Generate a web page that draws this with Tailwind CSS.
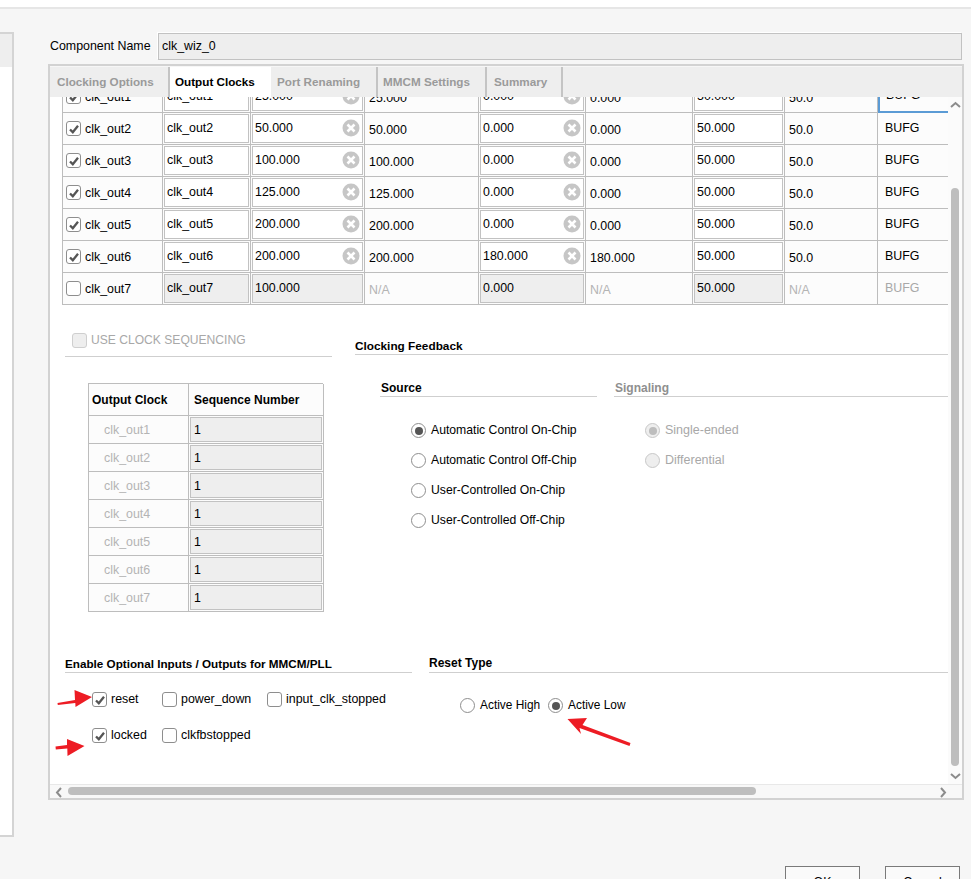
<!DOCTYPE html>
<html lang="en">
<head>
    <meta charset="UTF-8">
    <title>Clocking Wizard</title>
    <script src="https://cdn.jsdelivr.net/npm/@tailwindcss/browser@4"></script>
</head>
<body class="relative h-[879px] w-[971px] overflow-hidden bg-white font-['Liberation_Sans',Arial,sans-serif] text-[12.4px] text-black">
    <div class="h-[7px] bg-white"></div>
    <div class="flex h-[872px] border-t-2 border-[#e6e6e6] bg-[#f6f6f6]">
        <!-- Left panel -->
        <div class="mt-[23px] flex h-[805px] w-[14px] shrink-0 flex-col border-y-2 border-r-2 border-[#d4d4d4] bg-white">
            <div class="h-[33px] bg-[#eeeeee]"></div>
        </div>
        <!-- Right side -->
        <div class="min-w-0 flex-1 pl-[34px] pr-[7px] pt-[24px]">
            <div class="flex h-[27px] items-center pr-[2px]">
                <span class="w-[110px] pl-[2px]">Component Name</span>
                <div class="flex h-full flex-1 items-center border border-[#c2c2c2] bg-[#eeeeee] pl-[3px] shadow-[-1px_-1px_0_#fff]">clk_wiz_0</div>
            </div>
            <!-- Tabbed panel -->
            <div class="mt-[4px] flex h-[736px] flex-col border-2 border-[#d2d2d2] bg-white">
                <div class="flex h-[31px] border-t-[1px] border-[#f6f6f6] bg-[#eeeeee] text-[11.7px] font-bold text-[#9a9a9a]">
                    <div class="flex w-[118px] items-center pl-[7px]">Clocking Options</div>
                    <div class="flex w-[103px] items-center border-l-2 border-[#c4c4c4] bg-white pl-[5px] text-black">Output Clocks</div>
                    <div class="flex w-[105px] items-center pl-[6px]">Port Renaming</div>
                    <div class="flex w-[109px] items-center border-l-2 border-[#c4c4c4] pl-[5px]">MMCM Settings</div>
                    <div class="flex w-[78px] items-center border-x-2 border-[#c4c4c4] pl-[7px]">Summary</div>
                </div>
                <div class="flex h-[687px]">
                    <div class="w-[898px] shrink-0 overflow-hidden">
                        <!-- Output clocks table -->
                        <div id="clockRows" class="ml-[12px] mt-[-17px] w-[900px] border-l border-t border-[#bdbdbd]"></div>
                        <div class="flex">
                            <div class="ml-[15px] w-[267px]">
                                <div class="mt-[28px] flex items-center text-[12.1px] text-[#a8a8a8]">
                                    <span class="ml-[7px] h-[15px] w-[15px] rounded-[3px] border border-[#cfcfcf] bg-[#eeeeee]"></span>
                                    <span class="ml-[4px] leading-[15px]">USE CLOCK SEQUENCING</span>
                                </div>
                                <div class="mt-[8px] border-b border-[#cfcfcf]"></div>
                                <div id="seqTable" class="ml-[23px] mt-[26px] w-[235px] border-l border-t border-[#bdbdbd] bg-[#fcfcfc]"></div>
                            </div>
                            <div class="ml-[23px] flex-1">
                                <div class="mt-[33px] h-[17px] border-b border-[#cfcfcf] text-[11.8px] font-bold leading-[16px]">Clocking Feedback</div>
                                <div class="ml-[25px] mt-[25px] flex">
                                    <div class="w-[217px]">
                                        <div class="h-[17px] border-b border-[#cfcfcf] pl-[1px] text-[12px] font-bold leading-[17px]">Source</div>
                                        <div id="sourceRadios" class="ml-[31px] mt-[26px] flex flex-col gap-[15px] text-[12.2px]"></div>
                                    </div>
                                    <div class="ml-[17px] flex-1">
                                        <div class="h-[17px] border-b border-[#cfcfcf] pl-[1px] text-[12px] font-bold leading-[17px] text-[#8f8f8f]">Signaling</div>
                                        <div id="signalRadios" class="ml-[31px] mt-[26px] flex flex-col gap-[15px] text-[12.5px] text-[#a8a8a8]"></div>
                                    </div>
                                </div>
                            </div>
                        </div>
                        <!-- Optional ports and reset type -->
                        <div class="ml-[15px] mt-[44px] flex">
                            <div class="w-[347px]">
                                <div class="h-[17px] border-b border-[#cfcfcf] text-[11.7px] font-bold leading-[15px]">Enable Optional Inputs / Outputs for MMCM/PLL</div>
                                <div class="ml-[27px] mt-[19px] flex h-[15px] items-center">
                                    <div id="cbReset" class="w-[70px]"></div>
                                    <div id="cbPower" class="w-[105px]"></div>
                                    <div id="cbStopped"></div>
                                </div>
                                <div class="ml-[27px] mt-[21px] flex h-[15px] items-center">
                                    <div id="cbLocked" class="w-[70px]"></div>
                                    <div id="cbFb"></div>
                                </div>
                            </div>
                            <div class="ml-[17px] flex-1">
                                <div class="h-[17px] border-b border-[#cfcfcf] text-[12px] font-bold leading-[15px]">Reset Type</div>
                                <div id="resetRadios" class="ml-[31px] mt-[25px] flex text-[11.9px]"></div>
                            </div>
                        </div>
                    </div>
                    <!-- Vertical scrollbar -->
                    <div class="relative flex-1 bg-[#fbfbfb]">
                        <svg class="absolute left-[2px] top-[4px]" width="11" height="8" viewBox="0 0 11 8"><path d="M1 6 L5.5 2 L10 6" fill="none" stroke="#8c8c8c" stroke-width="2"/></svg>
                        <div class="absolute left-[3px] top-[91px] h-[578px] w-[8px] rounded-[4px] bg-[#bebebe]"></div>
                        <svg class="absolute left-[2px] top-[675px]" width="11" height="8" viewBox="0 0 11 8"><path d="M1 2 L5.5 6 L10 2" fill="none" stroke="#8c8c8c" stroke-width="2"/></svg>
                    </div>
                </div>
                <!-- Horizontal scrollbar -->
                <div class="relative h-[14px] border-t border-[#e8e8e8] bg-[#f8f8f8]">
                    <svg class="absolute left-[5px] top-[2px]" width="8" height="11" viewBox="0 0 8 11"><path d="M6 1 L2 5.5 L6 10" fill="none" stroke="#8c8c8c" stroke-width="2"/></svg>
                    <div class="absolute left-[18px] top-[2px] h-[8px] w-[688px] rounded-[4px] bg-[#bebebe]"></div>
                    <svg class="absolute left-[889px] top-[2px]" width="8" height="11" viewBox="0 0 8 11"><path d="M2 1 L6 5.5 L2 10" fill="none" stroke="#8c8c8c" stroke-width="2"/></svg>
                </div>
            </div>
            <!-- Dialog buttons -->
            <div class="ml-[737px] mt-[66px] flex gap-[25px]">
                <div class="flex h-[28px] w-[75px] justify-center border border-[#7a7a7a] bg-[#fafafa] pt-[6px]">OK</div>
                <div class="flex h-[28px] w-[75px] justify-center border border-[#7a7a7a] bg-[#fafafa] pt-[6px]">Cancel</div>
            </div>
        </div>
    </div>
    <!-- Red annotation arrows -->
    <svg class="pointer-events-none absolute left-0 top-0" width="971" height="879" viewBox="0 0 971 879">
        <path d="M57.5 703 L75 700 L74.5 690 L92 697 L75.5 707 L75.3 703 L57.8 705 Z" fill="#ed1c24"/>
        <path d="M55.5 746.5 L67 745 L67 739 L84.5 746 L67.5 756 L67.3 748.5 L55.8 749.5 Z" fill="#ed1c24"/>
        <path d="M567.5 719 L587 718 L582.5 725 L630.5 743 L629.5 746 L579.5 728 L581 734 Z" fill="#ed1c24"/>
    </svg>
    <script>
        //Icons
        const clearIcon = `<svg class="absolute right-[2px] top-[4px]" width="18" height="18" viewBox="0 0 18 18"><circle cx="9" cy="9" r="8.5" fill="#c6c6c6"/><path d="M5.5 5.5 L12.5 12.5 M12.5 5.5 L5.5 12.5" stroke="#fff" stroke-width="2.6"/></svg>`;
        const tick = `<svg width="12" height="12" viewBox="0 0 12 12"><path d="M2 6.5 L4.8 9.2 L10 2.8" fill="none" stroke="#555" stroke-width="2.3"/></svg>`;

        function checkbox(label, on) {
            return `<div class="flex items-center"><span class="flex h-[15px] w-[15px] items-center justify-center rounded-[3px] border-[1.5px] border-[#8e8e8e] bg-white">${on ? tick : ''}</span><span class="ml-[4px]">${label}</span></div>`;
        }
        function radio(label, on, off) {
            const ring = off ? 'border-[#c8c8c8] bg-[#eeeeee]' : 'border-[#8e8e8e] bg-white';
            const dot = off ? 'bg-[#bdbdbd]' : 'bg-[#555555]';
            return `<div class="flex h-[15px] items-center"><span class="flex h-[15px] w-[15px] items-center justify-center rounded-full border-[1.5px] ${ring}">${on ? `<span class="h-[8px] w-[8px] rounded-full ${dot}"></span>` : ''}</span><span class="ml-[5px]">${label}</span></div>`;
        }

        //Output clock rows
        const clocks = [
            ['clk_out1', '25.000', '25.000', '0.000', '0.000'],
            ['clk_out2', '50.000', '50.000', '0.000', '0.000'],
            ['clk_out3', '100.000', '100.000', '0.000', '0.000'],
            ['clk_out4', '125.000', '125.000', '0.000', '0.000'],
            ['clk_out5', '200.000', '200.000', '0.000', '0.000'],
            ['clk_out6', '200.000', '200.000', '180.000', '180.000'],
            ['clk_out7', '100.000', 'N/A', '0.000', 'N/A']
        ];
        const cell = 'relative border-r border-b border-[#bdbdbd]';
        function field(text, off, clear) {
            const bg = off ? 'bg-[#eeeeee]' : 'bg-white';
            return `<div class="${cell} p-[1px]"><div class="relative flex h-[29px] items-center border border-[#c2c2c2] pl-[2px] ${bg}">${text}${clear && !off ? clearIcon : ''}</div></div>`;
        }
        function plain(text, off) {
            return `<div class="${cell} flex items-center pl-[4px] pt-[4px] ${off ? 'text-[#b4b4b4]' : ''}">${text}</div>`;
        }
        document.getElementById('clockRows').innerHTML = clocks.map((c, i) => {
            const off = i === 6;
            const last = i === 0
                ? `<div class="relative border-b-2 border-l-2 border-[#5b9bd5] pl-[6px] pt-[5px]">BUFG</div>`
                : `<div class="${cell} pl-[7px] pt-[6px] ${off ? 'text-[#a8a8a8]' : ''}">BUFG</div>`;
            return `<div class="grid h-[32px] grid-cols-[100px_88px_114px_114px_107px_107px_92px_93px_85px] bg-[#fcfcfc]">
                <div class="${cell} flex items-center pl-[3px] pt-[1px]">${checkbox(c[0], !off)}</div>
                ${field(c[0], off, false)}
                ${field(c[1], off, true)}
                ${plain(c[2], off)}
                ${field(c[3], off, true)}
                ${plain(c[4], off)}
                ${field('50.000', off, false)}
                ${plain(off ? 'N/A' : '50.0', off)}
                ${last}
            </div>`;
        }).join('');

        //Sequence table
        let seq = `<div class="grid h-[32px] grid-cols-[100px_135px] font-bold text-[12px]"><div class="${cell} flex items-center pl-[3px]">Output Clock</div><div class="${cell} flex items-center pl-[5px]">Sequence Number</div></div>`;
        for (let i = 1; i <= 7; i++) {
            seq += `<div class="grid h-[28px] grid-cols-[100px_135px]"><div class="${cell} flex items-center pl-[15px] pt-[2px] text-[#b4b4b4]">clk_out${i}</div><div class="${cell} p-[1px]"><div class="flex h-[25px] items-center border border-[#c2c2c2] bg-[#eeeeee] pl-[3px] pt-[2px]">1</div></div></div>`;
        }
        document.getElementById('seqTable').innerHTML = seq;

        //Radio groups
        document.getElementById('sourceRadios').innerHTML =
            radio('Automatic Control On-Chip', true) + radio('Automatic Control Off-Chip') +
            radio('User-Controlled On-Chip') + radio('User-Controlled Off-Chip');
        document.getElementById('signalRadios').innerHTML =
            radio('Single-ended', true, true) + radio('Differential', false, true);
        document.getElementById('resetRadios').innerHTML =
            `<div class="w-[88px]">${radio('Active High')}</div>` + radio('Active Low', true);

        //Optional port checkboxes
        document.getElementById('cbReset').innerHTML = checkbox('reset', true);
        document.getElementById('cbPower').innerHTML = checkbox('power_down');
        document.getElementById('cbStopped').innerHTML = checkbox('input_clk_stopped');
        document.getElementById('cbLocked').innerHTML = checkbox('locked', true);
        document.getElementById('cbFb').innerHTML = checkbox('clkfbstopped');
    </script>
</body>
</html>
